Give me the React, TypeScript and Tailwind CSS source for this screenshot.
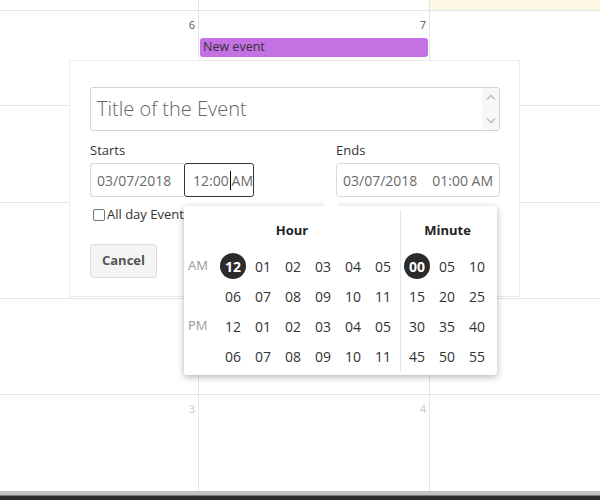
import React from 'react';

const font = { fontFamily: '"Open Sans", "Liberation Sans", sans-serif' };

const hourRows = [
  { label: 'AM', hours: ['12', '01', '02', '03', '04', '05'] },
  { label: '', hours: ['06', '07', '08', '09', '10', '11'] },
  { label: 'PM', hours: ['12', '01', '02', '03', '04', '05'] },
  { label: '', hours: ['06', '07', '08', '09', '10', '11'] },
];

const minuteRows = [
  ['00', '05', '10'],
  ['15', '20', '25'],
  ['30', '35', '40'],
  ['45', '50', '55'],
];

// One cell of the month grid
const Cell = ({ day, faded, today, children }: { day?: string; faded?: boolean; today?: boolean; children?: React.ReactNode }) => (
  <div className={`flex flex-col ${today ? 'bg-[#fcf8e3]' : ''}`}>
    {day && (
      <div className={`pt-[6px] pr-[3px] text-right text-[11px] leading-[15px] ${faded ? 'text-[#c8c8c8]' : 'text-[#555]'}`}>
        {day}
      </div>
    )}
    {children}
  </div>
);

const Row = ({ h, children, last }: { h: string; children: React.ReactNode; last?: boolean }) => (
  <div className={`grid grid-cols-[199px_231px_1fr] divide-x divide-[#e4e4e4] ${h} ${last ? '' : 'border-b border-[#e4e4e4]'}`}>
    {children}
  </div>
);

const Num = ({ v, active }: { v: string; active?: boolean }) => (
  <div className="flex h-[30px] w-[30px] items-center justify-center">
    {active ? (
      <span className="flex h-[26px] w-[26px] items-center justify-center rounded-full bg-[#2b2b2b] text-[14px] font-bold text-white">
        {v}
      </span>
    ) : (
      <span className="text-[14px] text-[#333]">{v}</span>
    )}
  </div>
);

const TimePicker = () => (
  <div className="absolute left-[184px] top-[206px] w-[313px] rounded-[3px] bg-white pt-[4px] pb-[4px] shadow-[0_2px_7px_rgba(0,0,0,0.3)]">
    <div className="absolute left-[140px] top-[-5px] h-[10px] w-[14px] bg-white" />
    <div className="flex">
      {/* Hours */}
      <div className="w-[216px]">
        <div className="flex h-[41px] items-center justify-center text-[13px] font-bold text-[#222]">Hour</div>
        {hourRows.map((row, i) => (
          <div key={i} className="flex h-[30px] items-center">
            <div className="w-[34px] pl-[4px] text-[13px] text-[#999]">{row.label}</div>
            {row.hours.map((h, j) => (
              <Num key={j} v={h} active={i === 0 && j === 0} />
            ))}
          </div>
        ))}
      </div>
      {/* Minutes */}
      <div className="flex-1 border-l border-[#e6e6e6] pl-[1px]">
        <div className="flex h-[41px] items-center justify-center pr-[4px] text-[13px] font-bold text-[#222]">Minute</div>
        {minuteRows.map((row, i) => (
          <div key={i} className="flex h-[30px] items-center">
            {row.map((m, j) => (
              <Num key={j} v={m} active={i === 0 && j === 0} />
            ))}
          </div>
        ))}
      </div>
    </div>
  </div>
);

const EventPopup = () => (
  <div className="absolute left-[69px] top-[60px] h-[237px] w-[451px] border border-[#ececec] bg-white pl-[20px] pr-[19px] pt-[26px]">
    {/* Title */}
    <div className="flex h-[44px] rounded-[3px] border border-[#d4d4d4]">
      <div className="flex flex-1 items-center pl-[6px] text-[20px] font-light text-[#666]">Title of the Event</div>
      <div className="flex w-[17px] flex-col items-center justify-between bg-[#f7f7f7] py-[6px] text-[#bbb]">
        <svg width="10" height="6" viewBox="0 0 10 6" fill="none" stroke="currentColor" strokeWidth="1.3">
          <path d="M1 5.5 5 1.5 9 5.5" />
        </svg>
        <svg width="10" height="6" viewBox="0 0 10 6" fill="none" stroke="currentColor" strokeWidth="1.3">
          <path d="M1 0.5 5 4.5 9 0.5" />
        </svg>
      </div>
    </div>

    {/* Starts / Ends */}
    <div className="mt-[10px] flex justify-between">
      <div className="w-[165px]">
        <div className="text-[13px] leading-[18px] text-[#333]">Starts</div>
        <div className="mt-[4px] flex h-[34px]">
          <div className="flex w-[94px] items-center rounded-l-[3px] border border-r-0 border-[#dadada] pl-[6px] text-[14px] text-[#6a6a6a]">
            03/07/2018
          </div>
          <div className="flex w-[70px] items-center rounded-[3px] border border-[#333] pl-[8px] text-[14px] text-[#6a6a6a]">
            12:00<span className="mx-[1px] inline-block h-[19px] w-[1px] bg-black" />AM
          </div>
        </div>
      </div>
      <div className="w-[164px]">
        <div className="text-[13px] leading-[18px] text-[#333]">Ends</div>
        <div className="mt-[4px] flex h-[34px] items-center justify-between rounded-[3px] border border-[#dadada] pl-[6px] pr-[6px] text-[14px] text-[#6a6a6a]">
          <span>03/07/2018</span>
          <span>01:00 AM</span>
        </div>
      </div>
    </div>

    {/* All day */}
    <label className="mt-[8px] flex items-center gap-[2px] pl-[3px] text-[13px] text-[#333]">
      <span className="inline-block h-[12px] w-[12px] rounded-[2px] border border-[#777] bg-white" />
      All day Event
    </label>

    <button className="mt-[19px] h-[34px] w-[67px] rounded-[3px] border border-[#dcdcdc] bg-[#f4f4f4] text-[13px] font-bold text-[#555]">
      Cancel
    </button>
  </div>
);

export default function App() {
  return (
    <div className="relative h-[500px] w-[600px] overflow-hidden bg-white" style={font}>
      <div className="flex h-[491px] flex-col">
        <Row h="h-[11px]">
          <Cell />
          <Cell />
          <Cell today />
        </Row>
        <Row h="h-[95px]">
          <Cell day="6" />
          <Cell day="7">
            <div className="mx-[1px] mt-[6px] flex h-[19px] items-center rounded-[3px] bg-[#c471e4] pl-[3px] text-[12.5px] text-[#333]">
              New event
            </div>
          </Cell>
          <Cell />
        </Row>
        <Row h="h-[97px]">
          <Cell />
          <Cell />
          <Cell />
        </Row>
        <Row h="h-[96px]">
          <Cell />
          <Cell />
          <Cell />
        </Row>
        <Row h="h-[96px]">
          <Cell />
          <Cell />
          <Cell />
        </Row>
        <Row h="flex-1" last>
          <Cell day="3" faded />
          <Cell day="4" faded />
          <Cell />
        </Row>
      </div>
      <div className="h-[4px] bg-[#c2c2c2]" />
      <div className="h-[1px] bg-[#777]" />
      <div className="h-[4px] bg-[#2a2a2a]" />

      <EventPopup />
      <TimePicker />
    </div>
  );
}
